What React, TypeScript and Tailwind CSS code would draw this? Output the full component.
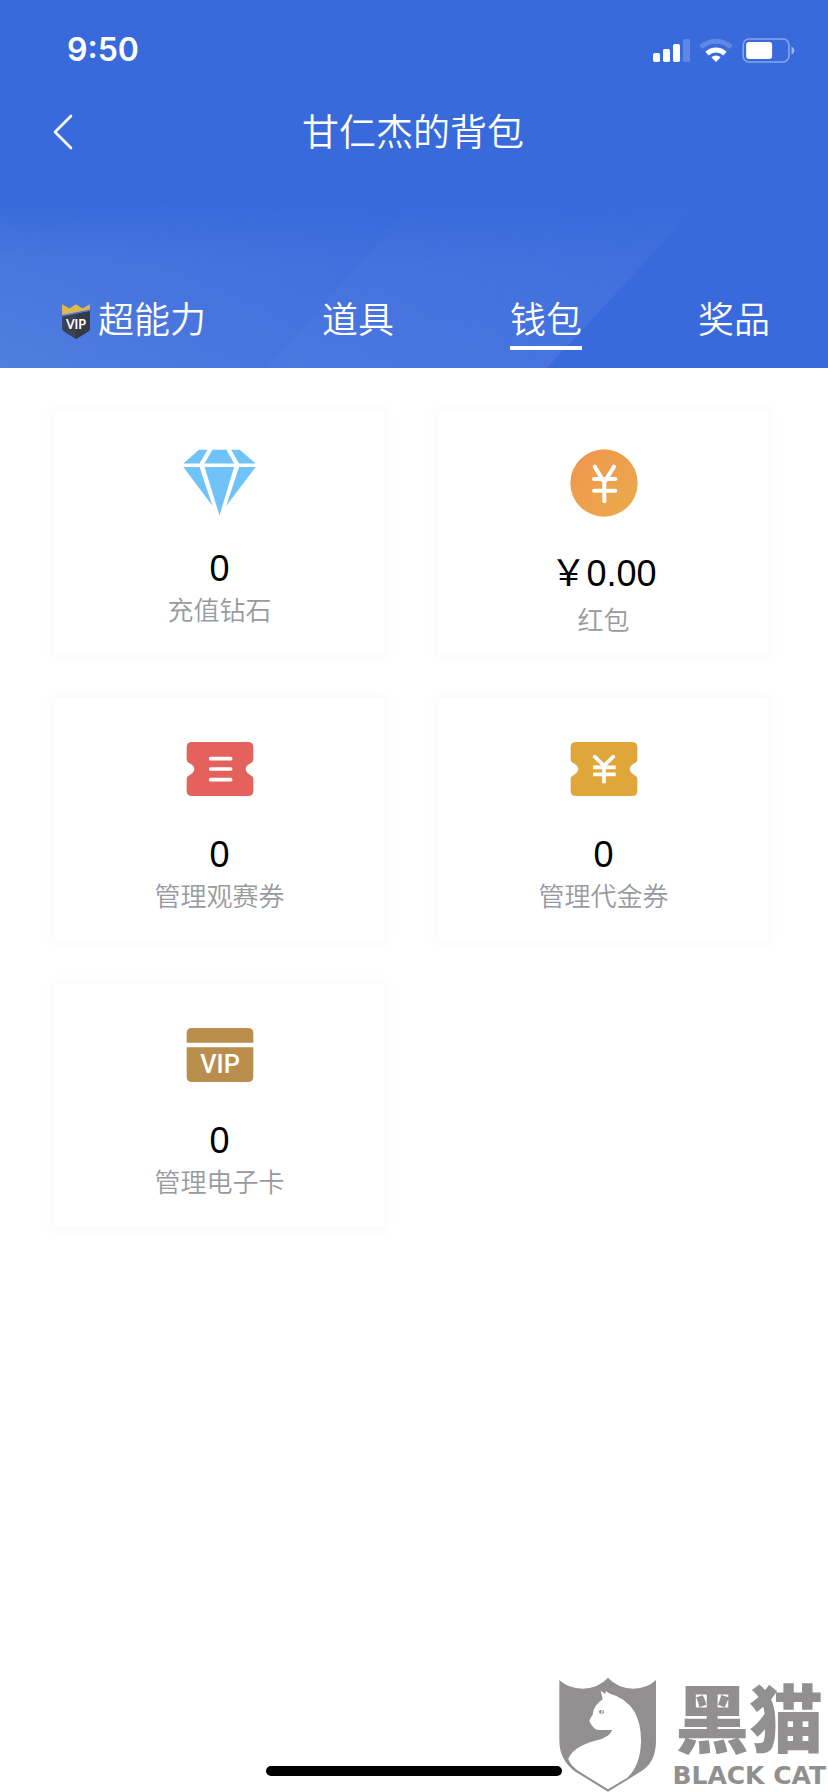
import type { ReactNode } from "react";

function SignalIcon() {
  return (
    <svg viewBox="0 0 111 69" className="h-[23px] w-[37px]" fill="#fff">
      <rect x="0" y="42" width="21" height="27" rx="5" />
      <rect x="30" y="30" width="21" height="39" rx="5" />
      <rect x="60" y="15" width="21" height="54" rx="5" />
      <rect x="90" y="0" width="21" height="69" rx="5" opacity="0.2" />
    </svg>
  );
}

function WifiIcon() {
  return (
    <svg viewBox="0 0 102 72" className="h-6 w-[34px]" fill="none" stroke="#fff" strokeWidth="15">
      <path d="M6 28 A64 64 0 0 1 96 28" opacity="0.2" />
      <path d="M24 47 A39 39 0 0 1 78 47" />
      <path d="M37 58 A20 20 0 0 1 65 58 L51 72 Z" fill="#fff" stroke="none" />
    </svg>
  );
}

function BatteryIcon() {
  return (
    <svg viewBox="0 0 160 76" className="h-[25px] w-[53px]">
      <rect x="3" y="3" width="139" height="70" rx="18" fill="none" stroke="#fff" strokeWidth="5" opacity="0.4" />
      <rect x="12" y="12" width="79" height="52" rx="9" fill="#fff" />
      <path d="M150 26 Q159 30 159 38 Q159 46 150 50 Z" fill="#fff" opacity="0.5" />
    </svg>
  );
}

function VipShield() {
  return (
    <svg viewBox="0 0 84 106" className="h-[35px] w-7">
      <path d="M0 1 L22 14 L42 1 L62 14 L84 1 V17 L0 33 Z" fill="#e0b94e" />
      <path d="M0 38 L84 22 V74 Q84 80 78 84 L42 106 L6 84 Q0 80 0 74 Z" fill="#3c4055" />
      <path d="M42 30 L84 22 V74 Q84 80 78 84 L42 106 Z" fill="#343848" />
      <text x="42" y="75" textAnchor="middle" fill="#fff" fontSize="38" fontWeight="700" fontFamily="Lato, sans-serif">
        VIP
      </text>
    </svg>
  );
}

function DiamondIcon() {
  return (
    <svg viewBox="0 0 220 204" className="h-[68px] w-[73px]" fill="#70c3f8">
      <path d="M48 2 H74 L50 43 H1 Z" />
      <path d="M89 2 H131 L154 43 H65 Z" />
      <path d="M145 2 H171 L219 43 H169 Z" />
      <path d="M1 54 H50 L89 171 Z" />
      <path d="M65 54 H154 L110 200 Z" />
      <path d="M169 54 H219 L130 171 Z" />
    </svg>
  );
}

function CoinIcon() {
  return (
    <svg viewBox="0 0 204 204" className="size-[68px]">
      <defs>
        <linearGradient id="coin" x1="0" y1="0" x2="1" y2="1">
          <stop offset="0.2" stopColor="#ef994e" />
          <stop offset="0.9" stopColor="#eba94c" />
        </linearGradient>
      </defs>
      <circle cx="102" cy="102" r="101" fill="url(#coin)" />
      <path
        d="M74 53 L103 100 L132 53 M72 90 H136 M72 125 H136 M103 96 V157"
        fill="none"
        stroke="#fff"
        strokeWidth="12"
        strokeLinecap="round"
      />
    </svg>
  );
}

function Ticket({ color, children }: { color: string; children: ReactNode }) {
  return (
    <svg viewBox="0 0 204 204" className="size-[68px]">
      <path
        d="M18 21 H186 Q202 21 202 37 V74 Q202 80 196 83 Q179 92 179 102 Q179 113 196 122 Q202 125 202 131 V167 Q202 183 186 183 H18 Q2 183 2 167 V131 Q2 125 8 122 Q25 113 25 102 Q25 92 8 83 Q2 80 2 74 V37 Q2 21 18 21 Z"
        fill={color}
      />
      <g fill="none" stroke="#fff" strokeWidth="11">
        {children}
      </g>
    </svg>
  );
}

function VipCardIcon() {
  return (
    <svg viewBox="0 0 204 204" className="size-[68px]">
      <path d="M18 21 H186 Q202 21 202 37 V65 H2 V37 Q2 21 18 21 Z" fill="#b98d4b" />
      <path d="M2 79 H202 V167 Q202 183 186 183 H18 Q2 183 2 167 Z" fill="#b98d4b" />
      <text x="102" y="157" textAnchor="middle" fill="#fff" fontSize="76" fontWeight="500" fontFamily="Roboto, sans-serif">
        VIP
      </text>
    </svg>
  );
}

const tabs = [
  { label: "超能力", icon: <VipShield /> },
  { label: "道具" },
  { label: "钱包", active: true },
  { label: "奖品" },
];

const cards = [
  { label: "充值钻石", value: "0", icon: <DiamondIcon /> },
  { label: "红包", value: "\uFFE50.00", money: true, icon: <CoinIcon /> },
  {
    label: "管理观赛券",
    value: "0",
    icon: (
      <Ticket color="#e4625b">
        <path d="M74 71 H134 M74 102 H134 M74 134 H134" strokeLinecap="round" />
      </Ticket>
    ),
  },
  {
    label: "管理代金券",
    value: "0",
    icon: (
      <Ticket color="#e1a63a">
        <path d="M74 65 L102 92 L130 65" strokeLinecap="round" />
        <path d="M69 97 H137 M69 118 H137 M102 90 V145" />
      </Ticket>
    ),
  },
  { label: "管理电子卡", value: "0", icon: <VipCardIcon /> },
];

function HeaderArt() {
  return (
    <svg viewBox="0 0 828 368" preserveAspectRatio="none" className="absolute inset-0 h-full w-full" aria-hidden="true">
      <defs>
        <linearGradient id="fade" x1="0" y1="0" x2="0" y2="1">
          <stop offset="0.54" stopColor="#000" />
          <stop offset="0.72" stopColor="#aaa" />
          <stop offset="1" stopColor="#fff" />
        </linearGradient>
        <mask id="fadeMask" maskUnits="userSpaceOnUse" x="0" y="0" width="828" height="368">
          <rect width="828" height="368" fill="url(#fade)" />
        </mask>
        <linearGradient id="glow" gradientUnits="userSpaceOnUse" x1="0" y1="0" x2="640" y2="0">
          <stop offset="0" stopColor="#6f97e2" stopOpacity="0.45" />
          <stop offset="0.5" stopColor="#6f8fe6" stopOpacity="0.28" />
          <stop offset="1" stopColor="#6f8fe6" stopOpacity="0.02" />
        </linearGradient>
        <linearGradient id="beam" gradientUnits="userSpaceOnUse" x1="270" y1="0" x2="660" y2="0">
          <stop offset="0" stopColor="#fff" stopOpacity="0.02" />
          <stop offset="1" stopColor="#fff" stopOpacity="0.06" />
        </linearGradient>
      </defs>
      <g mask="url(#fadeMask)">
        <path d="M0 190 H712 L547 368 H0 Z" fill="url(#glow)" />
        <path d="M425 190 H712 L547 368 H268 Z" fill="url(#beam)" />
      </g>
    </svg>
  );
}

function Header() {
  return (
    <header className="relative bg-[#386adc] text-white">
      <HeaderArt />
      <div className="relative">
        <div className="flex h-[100px] items-center justify-between pr-[33px] pl-[67px]">
          <span className="font-['Inter',sans-serif] text-[32px] leading-10 font-semibold">9:50</span>
          <div className="flex items-center gap-[9px]">
            <SignalIcon />
            <WifiIcon />
            <BatteryIcon />
          </div>
        </div>
        <div className="flex h-16 items-center pr-[55px] pl-[53px]">
          <div className="flex flex-1">
            <button type="button" aria-label="返回">
              <svg viewBox="0 0 20 36" className="h-9 w-5" fill="none" stroke="#fff" strokeWidth="2.6" strokeLinecap="round" strokeLinejoin="round">
                <path d="M18 2 L2 18 L18 34" />
              </svg>
            </button>
          </div>
          <h1 className="pt-1 text-[37px] leading-[54px] font-[350]">甘仁杰的背包</h1>
          <div className="flex-1" />
        </div>
        <nav className="flex justify-between pt-[132px] pr-[58px] pb-[18px] pl-[62px]">
          {tabs.map((t) => (
            <button
              key={t.label}
              type="button"
              className={`flex items-center gap-2 border-b-4 text-[36px] leading-[50px] font-[350] ${t.active ? "border-white" : "border-transparent"}`}
            >
              {t.icon}
              {t.label}
            </button>
          ))}
        </nav>
      </div>
    </header>
  );
}

function BlackCatMark() {
  return (
    <div className="absolute right-0 bottom-0 flex items-end gap-[15px] text-[#918f90]">
      <svg viewBox="57 50 294 345" className="h-[115px] w-[98px]">
        <path
          d="M58 59 Q84 84 128 85 Q176 83 204 52 Q232 83 280 85 Q323 84 348 59 V240 Q348 300 312 327 Q300 336 204 394 L106 334 Q58 300 58 240 Z"
          fill="currentColor"
        />
        <path
          d="M182 91 L196 101 L197 92 L210 100 Q258 112 284 155 Q304 192 303 245 Q301 315 262 352 L204 387 L112 330 Q92 314 85 297 Q88 283 108 267 Q132 250 170 240 Q207 232 217 209 L180 209 Q168 210 162 203 Q151 192 148 182 Q149 176 158 163 Q160 135 188 117 Z"
          fill="#fff"
        />
        <path d="M176 154 Q180 147 186 150 Q181 157 185 161 Q178 160 176 154 Z" fill="currentColor" />
        <path d="M187 149 Q194 151 192 157 Q188 161 186 161 Q190 155 187 149 Z" fill="currentColor" />
      </svg>
      <div className="flex flex-col items-center pr-[2px] pb-1">
        <span className="text-[74px] leading-[84px] font-black">黑猫</span>
        <span className="font-['DejaVu_Sans',sans-serif] text-[25px] leading-6 font-bold">BLACK CAT</span>
      </div>
    </div>
  );
}

export default function App() {
  return (
    <div className="relative flex min-h-screen flex-col bg-white font-['Liberation_Sans','Noto_Sans_CJK_SC',sans-serif]">
      <Header />
      <main className="grid flex-1 grid-cols-2 content-start gap-x-[55px] gap-y-[43px] pt-11 pr-[60px] pb-11 pl-[55px]">
        {cards.map((c) => (
          <section key={c.label} className="flex h-[243px] flex-col items-center bg-white pt-[37px] shadow-[0_0_12px_4px_rgba(0,0,0,0.025)]">
            {c.icon}
            <p className={`mt-[31px] text-[36px] text-black ${c.money ? "leading-[52px]" : "leading-[42px]"}`}>{c.value}</p>
            <p className="text-[26px] leading-[42px] font-[350] text-[#979aa1]">{c.label}</p>
          </section>
        ))}
      </main>
      <div className="mx-auto mb-4 h-[10px] w-[296px] rounded-full bg-black" />
      <BlackCatMark />
    </div>
  );
}
